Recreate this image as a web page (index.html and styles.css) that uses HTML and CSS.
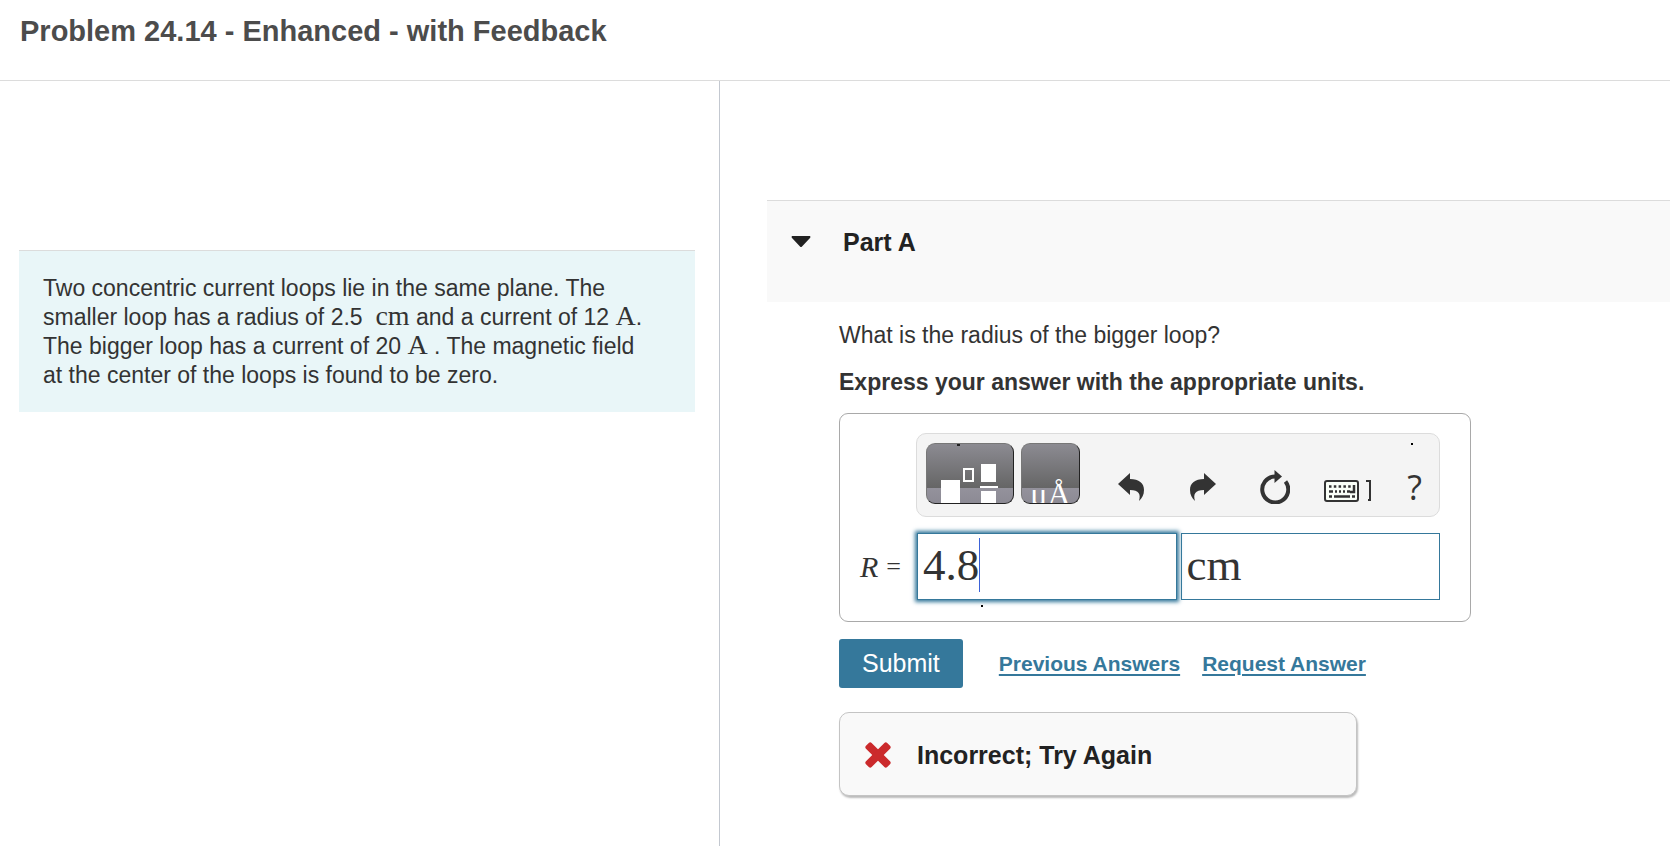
FILE: index.html
```html
<!DOCTYPE html>
<html lang="en">
<head>
    <meta charset="UTF-8">
    <meta name="viewport" content="width=device-width, initial-scale=1.0">
    <title>Problem 24.14</title>
    <link rel="stylesheet" href="styles.css">
</head>
<body>
    <header class="page-header">
        <h1>Problem 24.14 - Enhanced - with Feedback</h1>
    </header>

    <main class="panes">
        <section class="problem-pane">
            <p class="problem-text">Two concentric current loops lie in the same plane. The smaller loop has a radius of 2.5 &nbsp;<span class="unit">cm</span> and a current of 12 <span class="unit">A</span>. The bigger loop has a current of 20 <span class="unit">A</span> . The magnetic field at the center of the loops is found to be zero.</p>
        </section>

        <section class="answer-pane">
            <div class="part-header">
                <svg class="caret" width="20" height="12" viewBox="0 0 20 12"><path d="M1 0h18q1 1 0 2l-8 8.500q-1 1-2 0L1 2Q0 1 1 0z" fill="#222"/></svg>
                <h2>Part A</h2>
            </div>

            <form class="part-body">
                <p class="question">What is the radius of the bigger loop?</p>
                <p class="instruction">Express your answer with the appropriate units.</p>

                <div class="answer-box">
                    <div class="toolbar">
                        <button type="button" class="tool tool-templates" aria-label="Templates">
                            <svg width="86" height="59" viewBox="0 0 86 59">
                                <path d="M14 36h19v23H14zM54 20h15v18H54zM53 42h18v2H53zM54 47h15v12H54z" fill="#fff"/>
                                <rect x="37" y="25" width="9" height="12" fill="none" stroke="#fff" stroke-width="2"/>
                                <path d="M30 0h3v2h-3z" fill="#222"/>
                            </svg>
                        </button>
                        <button type="button" class="tool tool-symbols">μÅ</button>
                        <div class="tool-icons">
                            <button type="button" class="icon" aria-label="Undo">
                                <svg width="26" height="30" viewBox="0 0 26 30"><path d="M0 12 12 1v6c9 0 14 4 14 11 0 5-2 8-5 11 2-7 0-11-9-11v5z" fill="#333"/></svg>
                            </button>
                            <button type="button" class="icon" aria-label="Redo">
                                <svg width="26" height="30" viewBox="0 0 26 30"><path d="M26 12 14 1v6C5 7 0 11 0 18c0 5 2 8 5 11-2-7 0-11 9-11v5z" fill="#333"/></svg>
                            </button>
                            <button type="button" class="icon" aria-label="Reset">
                                <svg width="30" height="34" viewBox="0 0 30 34"><path d="M25.500 11.500A13 13 0 1 1 15 6.500" fill="none" stroke="#333" stroke-width="4"/><path d="M14.500 0 22 6.500 14.500 13z" fill="#333"/></svg>
                            </button>
                            <button type="button" class="icon" aria-label="Keyboard">
                                <svg width="48" height="32" viewBox="0 -8 48 32">
                                    <rect x="2" y="2" width="33" height="20" rx="2" fill="#fafff8" stroke="#333" stroke-width="2"/>
                                    <path d="M6 7.500h22" stroke="#333" stroke-width="2.500" stroke-dasharray="2.500 2.300"/>
                                    <path d="M6 12.500h21" stroke="#333" stroke-width="2.500" stroke-dasharray="4 2 2 2 2 2 2 2"/>
                                    <path d="M31 6v7h-4M6 17.500h3M11 17.500h16M29 17.500h3" fill="none" stroke="#333" stroke-width="2.500"/>
                                    <path d="M43 2h4v19h-2" fill="none" stroke="#333" stroke-width="2"/>
                                </svg>
                            </button>
                            <button type="button" class="icon help">?</button>
                        </div>
                        <span class="speck speck-help"></span>
                    </div>

                    <div class="answer-row">
                        <label for="value"><i>R</i><span>=</span></label>
                        <div class="value-field">
                            <input type="text" id="value" class="field focused" value="4.8">
                            <span class="cursor"></span>
                            <span class="speck speck-value"></span>
                        </div>
                        <input type="text" class="field" value="cm" aria-label="Units">
                    </div>
                </div>

                <div class="actions">
                    <button type="button" class="submit">Submit</button>
                    <a href="#">Previous Answers</a>
                    <a href="#">Request Answer</a>
                </div>

                <div class="feedback">
                    <svg width="26" height="26" viewBox="0 0 26 26"><g transform="rotate(45 13 13)" fill="#cb2a2c"><rect x="-2" y="9" width="30" height="8" rx="2"/><rect x="9" y="-2" width="8" height="30" rx="2"/></g></svg>
                    <strong>Incorrect; Try Again</strong>
                </div>
            </form>
        </section>
    </main>
</body>
</html>
```
FILE: styles.css
```css
:root {
    --accent: #35789b;
    --text: #333;
    --dark: #222;
    --line: #dcdcdc;
    --serif: "Liberation Serif", "Times New Roman", serif;
}

* {
    margin: 0;
    padding: 0;
    box-sizing: border-box;
}

body {
    font-family: "Liberation Sans", Helvetica, Arial, sans-serif;
    font-size: 23px;
    line-height: 29px;
    color: var(--text);
    background: #fff;
    min-height: 100vh;
    display: flex;
    flex-direction: column;
}

button {
    font-family: inherit;
    border: none;
    cursor: pointer;
}

svg {
    display: block;
}

.page-header {
    padding: 15px 20px 33px;
    border-bottom: 1px solid var(--line);
}

h1 {
    font-size: 29px;
    line-height: 32px;
    color: #4c4c4c;
}

.panes {
    flex: 1;
    display: flex;
}

.problem-pane {
    flex: 0 1 720px;
    padding: 169px 24px 0 19px;
    border-right: 1px solid #c3c8d0;
}

.problem-text {
    padding: 23px 40px 22px 24px;
    border-top: 1px solid var(--line);
    background: #e9f6f8;
}

.unit {
    font-family: var(--serif);
    font-size: 28px;
    line-height: 20px;
}

.answer-pane {
    flex: 1;
    padding: 119px 0 0 47px;
}

.part-header {
    display: flex;
    gap: 32px;
    height: 102px;
    padding: 27px 24px;
    border-top: 1px solid var(--line);
    background: #f9f9f9;
}

.caret {
    margin-top: 8px;
}

h2 {
    font-size: 25px;
    line-height: 29px;
    color: var(--dark);
}

.part-body {
    padding: 19px 24px 24px 72px;
}

.instruction {
    margin-top: 18px;
    font-weight: bold;
}

.answer-box {
    max-width: 632px;
    margin-top: 16px;
    padding: 19px 30px 21px 20px;
    border: 1px solid #a9a9a9;
    border-radius: 9px;
}

.toolbar {
    position: relative;
    display: flex;
    gap: 7px;
    margin-left: 56px;
    height: 84px;
    padding: 9px;
    border: 1px solid var(--line);
    border-radius: 10px;
    background: #f4f4f4;
}

.tool {
    flex: none;
    height: 61px;
    border: 1px solid #777;
    border-right-color: #222;
    border-bottom-color: #222;
    border-radius: 9px;
    background: linear-gradient(#8c8b92, #656565 75%, #94929c 75%, #8c8a94);
    overflow: hidden;
}

.tool-templates {
    width: 88px;
}

.tool-symbols {
    width: 59px;
    padding: 26px 0 0;
    font-family: var(--serif);
    font-size: 32px;
    line-height: 48px;
    color: #fff;
}

.tool-icons {
    flex: 1;
    display: flex;
    align-items: center;
    padding: 23px 8px 0;
}

.icon {
    display: flex;
    justify-content: center;
    width: 72px;
    background: none;
}

.help {
    flex: 1;
    width: auto;
    justify-content: flex-end;
    font-family: "Open Sans", "Noto Sans", sans-serif;
    font-size: 34px;
    line-height: 36px;
    color: var(--text);
}

.speck {
    position: absolute;
    width: 2px;
    height: 2px;
    background: #000;
}

.speck-help {
    top: 9px;
    right: 26px;
}

.speck-value {
    left: 64px;
    bottom: -7px;
}

.answer-row {
    display: grid;
    grid-template-columns: 53px 1fr 1fr;
    gap: 4px;
    margin-top: 16px;
}

.answer-row label {
    display: flex;
    align-items: center;
    gap: 8px;
    font-family: var(--serif);
    font-size: 30px;
}

.answer-row label span {
    font-size: 26px;
}

.value-field {
    position: relative;
}

.field {
    width: 100%;
    min-width: 0;
    height: 67px;
    padding: 0 5px 3px;
    border: 1px solid var(--accent);
    font-family: var(--serif);
    font-size: 45px;
    color: var(--text);
    outline: none;
}

.focused {
    display: block;
    box-shadow: 0 0 4px 2px var(--accent);
}

.cursor {
    position: absolute;
    left: 62px;
    top: 5px;
    width: 1px;
    height: 54px;
    background: #3b62d8;
}

.actions {
    display: flex;
    align-items: center;
    gap: 22px;
    margin-top: 17px;
}

.submit {
    height: 49px;
    margin-right: 14px;
    padding: 0 23px;
    border-radius: 3px;
    background: var(--accent);
    font-size: 25px;
    color: #fff;
}

.actions a {
    font-size: 21px;
    font-weight: bold;
    color: var(--accent);
    text-underline-offset: 3px;
    text-decoration-thickness: 2px;
}

.feedback {
    display: flex;
    align-items: center;
    gap: 26px;
    max-width: 518px;
    height: 84px;
    margin-top: 24px;
    padding: 2px 25px 0;
    border: 1px solid #c4c4c4;
    border-radius: 10px;
    background: #f9f9f9;
    box-shadow: 1px 2px 2px #bbb;
    font-size: 25px;
    color: var(--dark);
}
```
